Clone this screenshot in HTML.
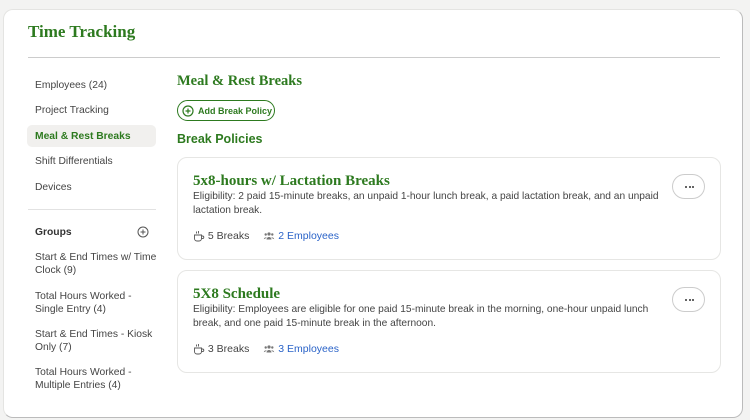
<!DOCTYPE html><html><head><style>
*{margin:0;padding:0;box-sizing:border-box}
body{width:750px;height:420px;background:#f3f3f2;font-family:"Liberation Sans",sans-serif;position:relative;overflow:hidden;color:#333}
.card{position:absolute;left:3px;top:9px;width:740px;height:409px;background:#fff;border-radius:10px;border:1px solid #e4e4e2;border-right:1.5px solid #bbb;border-bottom:1.5px solid #bbb}
.a{position:absolute;white-space:nowrap}
.serif{font-family:"Liberation Serif",serif;font-weight:bold;color:#2d7a1f}
.side{font-size:10.3px;color:#444}
.pc{position:absolute;left:177px;width:544px;height:103px;border:1px solid #e6e6e4;border-radius:10px}
.t{font-size:15px;left:15px}
.e{font-size:10.2px;color:#444;left:15px;line-height:14px;width:472px;white-space:normal}
.f{font-size:10.5px;color:#444;left:15px;display:flex;align-items:center}
.dots{position:absolute;right:15px;top:16px;width:33px;height:25px;border:1px solid #ccc;border-radius:13px}
.dots i{position:absolute;top:11px;width:2px;height:2px;background:#333;border-radius:50%}
</style></head><body>
<div class="card"></div>
<div class="a serif" style="left:28px;top:22px;font-size:17px">Time Tracking</div>
<div class="a" style="left:28px;top:57px;width:692px;height:1px;background:#ccc"></div>
<div class="a side" style="left:35px;top:80px">Employees (24)</div>
<div class="a side" style="left:35px;top:105px">Project Tracking</div>
<div class="a" style="left:27px;top:125px;width:129px;height:22px;background:#f1f0ee;border-radius:5px"></div>
<div class="a side" style="left:35px;top:131px;font-weight:bold;color:#2d7a1f">Meal &amp; Rest Breaks</div>
<div class="a side" style="left:35px;top:156px">Shift Differentials</div>
<div class="a side" style="left:35px;top:182px">Devices</div>
<div class="a" style="left:28px;top:209px;width:128px;height:1px;background:#e2e2e2"></div>
<div class="a side" style="left:35px;top:227px;font-weight:bold;color:#333">Groups</div>
<svg class="a" style="left:137px;top:226px" width="12" height="12" viewBox="0 0 12 12"><circle cx="6" cy="6" r="5" fill="none" stroke="#555" stroke-width="1"/><path d="M6 3.5v5M3.5 6h5" stroke="#555" stroke-width="1"/></svg>
<div class="a side" style="left:35px;top:251px;line-height:13px;white-space:normal;width:125px">Start &amp; End Times w/ Time Clock (9)</div>
<div class="a side" style="left:35px;top:290px;line-height:13px;white-space:normal;width:115px">Total Hours Worked - Single Entry (4)</div>
<div class="a side" style="left:35px;top:328px;line-height:13px;white-space:normal;width:125px">Start &amp; End Times - Kiosk Only (7)</div>
<div class="a side" style="left:35px;top:366px;line-height:13px;white-space:normal;width:115px">Total Hours Worked - Multiple Entries (4)</div>

<div class="a serif" style="left:177px;top:73px;font-size:14.5px">Meal &amp; Rest Breaks</div>
<div class="a" style="left:177px;top:100px;width:98px;height:21px;border:1px solid #2d7a1f;border-radius:11px"></div>
<svg class="a" style="left:182px;top:105px" width="12" height="12" viewBox="0 0 12 12"><circle cx="6" cy="6" r="5" fill="none" stroke="#2d7a1f" stroke-width="1.2"/><path d="M6 3.5v5M3.5 6h5" stroke="#2d7a1f" stroke-width="1.2"/></svg>
<div class="a" style="left:198px;top:105.5px;font-size:9px;font-weight:bold;color:#2d7a1f">Add Break Policy</div>
<div class="a" style="left:177px;top:132px;font-size:12.5px;font-weight:bold;color:#2d7a1f">Break Policies</div>

<div class="pc" style="top:157px">
<div class="a serif t" style="top:15px">5x8-hours w/ Lactation Breaks</div>
<div class="a e" style="top:32px">Eligibility: 2 paid 15-minute breaks, an unpaid 1-hour lunch break, a paid lactation break, and an unpaid lactation break.</div>
<div class="a f" style="top:72px"><svg width="12" height="12" viewBox="0 0 12 12"><path d="M1.5 5h7v3.5a2.5 2.5 0 0 1-2.5 2.5h-2a2.5 2.5 0 0 1-2.5-2.5z M8.5 6h1a1.3 1.3 0 0 1 0 2.6h-1 M3.5 1.5v2 M5.5 1v2.5" fill="none" stroke="#555" stroke-width="0.9"/></svg>&nbsp;5 Breaks<span style="width:14px"></span><svg width="12" height="12" viewBox="0 0 12 12"><circle cx="6" cy="4" r="1.6" fill="#777"/><circle cx="2.7" cy="4.5" r="1.2" fill="#777"/><circle cx="9.3" cy="4.5" r="1.2" fill="#777"/><path d="M3.5 9.5a2.5 2.5 0 0 1 5 0z M0.8 9.3a2 2 0 0 1 3-1.6 M11.2 9.3a2 2 0 0 0-3-1.6" fill="#777"/></svg>&nbsp;<span style="color:#2a63c8">2 Employees</span></div>
<div class="dots"><i style="left:12px"></i><i style="left:15.5px"></i><i style="left:19px"></i></div>
</div>
<div class="pc" style="top:270px">
<div class="a serif t" style="top:15px">5X8 Schedule</div>
<div class="a e" style="top:32px">Eligibility: Employees are eligible for one paid 15-minute break in the morning, one-hour unpaid lunch break, and one paid 15-minute break in the afternoon.</div>
<div class="a f" style="top:72px"><svg width="12" height="12" viewBox="0 0 12 12"><path d="M1.5 5h7v3.5a2.5 2.5 0 0 1-2.5 2.5h-2a2.5 2.5 0 0 1-2.5-2.5z M8.5 6h1a1.3 1.3 0 0 1 0 2.6h-1 M3.5 1.5v2 M5.5 1v2.5" fill="none" stroke="#555" stroke-width="0.9"/></svg>&nbsp;3 Breaks<span style="width:14px"></span><svg width="12" height="12" viewBox="0 0 12 12"><circle cx="6" cy="4" r="1.6" fill="#777"/><circle cx="2.7" cy="4.5" r="1.2" fill="#777"/><circle cx="9.3" cy="4.5" r="1.2" fill="#777"/><path d="M3.5 9.5a2.5 2.5 0 0 1 5 0z M0.8 9.3a2 2 0 0 1 3-1.6 M11.2 9.3a2 2 0 0 0-3-1.6" fill="#777"/></svg>&nbsp;<span style="color:#2a63c8">3 Employees</span></div>
<div class="dots"><i style="left:12px"></i><i style="left:15.5px"></i><i style="left:19px"></i></div>
</div>
</body></html>
